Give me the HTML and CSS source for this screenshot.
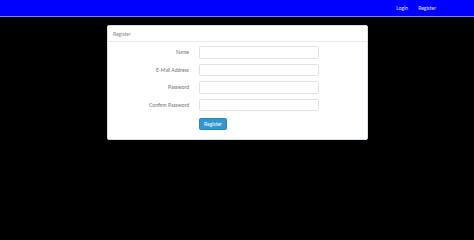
FILE: index.html
```html
<!DOCTYPE html>
<html>
<head>
<meta charset="utf-8">
<link rel="stylesheet" href="styles.css">
</head>
<body>
<nav class="navbar">
  <a class="nav-link" href="#">Login</a>
  <a class="nav-link" href="#">Register</a>
</nav>
<main class="container">
  <section class="panel">
    <div class="panel-heading">Register</div>
    <form class="panel-body">
      <div class="row"><label>Name</label><input class="field" type="text"></div>
      <div class="row"><label>E-Mail Address</label><input class="field" type="email"></div>
      <div class="row"><label>Password</label><input class="field" type="password"></div>
      <div class="row"><label>Confirm Password</label><input class="field" type="password"></div>
      <div class="row"><span></span><div><button class="btn" type="button">Register</button></div></div>
    </form>
  </section>
</main>
</body>
</html>
```
FILE: styles.css
```css
html, body {
  margin: 0;
  padding: 0;
  background: #000;
  font-family: Lato, "Open Sans", sans-serif;
  font-size: 5px;
}
.navbar {
  height: 16px;
  background: #0000ff;
  border-bottom: 1px solid #7f7fff;
  display: flex;
  justify-content: flex-end;
  align-items: center;
  gap: 10px;
  padding-right: 38px;
}
.nav-link {
  color: #e6e6ff;
  text-decoration: none;
  font-size: 5px;
}
.container {
  padding-top: 8px;
  padding-left: 107px;
}
.panel {
  width: 261px;
  height: 115px;
  background: #fff;
  border: 1px solid #d3e0e9;
  border-radius: 2px;
  box-sizing: border-box;
}
.panel-heading {
  height: 15px;
  border-bottom: 1px solid #e4ebf0;
  color: #888;
  padding-left: 5px;
  display: flex;
  align-items: center;
  font-size: 5px;
}
.panel-body {
  padding-top: 4px;
  display: flex;
  flex-direction: column;
  gap: 5px;
}
.row {
  display: grid;
  grid-template-columns: 81px 120px;
  column-gap: 10px;
  align-items: center;
  height: 12.5px;
}
.row label {
  text-align: right;
  color: #6b7276;
  font-size: 5px;
}
.field {
  box-sizing: border-box;
  width: 120px;
  height: 12.5px;
  border: 1px solid #dde2e6;
  border-radius: 1.5px;
  margin: 0;
  padding: 0;
  background: #fff;
}
.btn {
  box-sizing: border-box;
  width: 28px;
  height: 12px;
  margin-top: 2px;
  padding: 0;
  background: #3097d1;
  border: 1px solid #2a88bd;
  border-radius: 1.5px;
  color: #fff;
  font-family: Lato, "Open Sans", sans-serif;
  font-size: 5px;
}
```
